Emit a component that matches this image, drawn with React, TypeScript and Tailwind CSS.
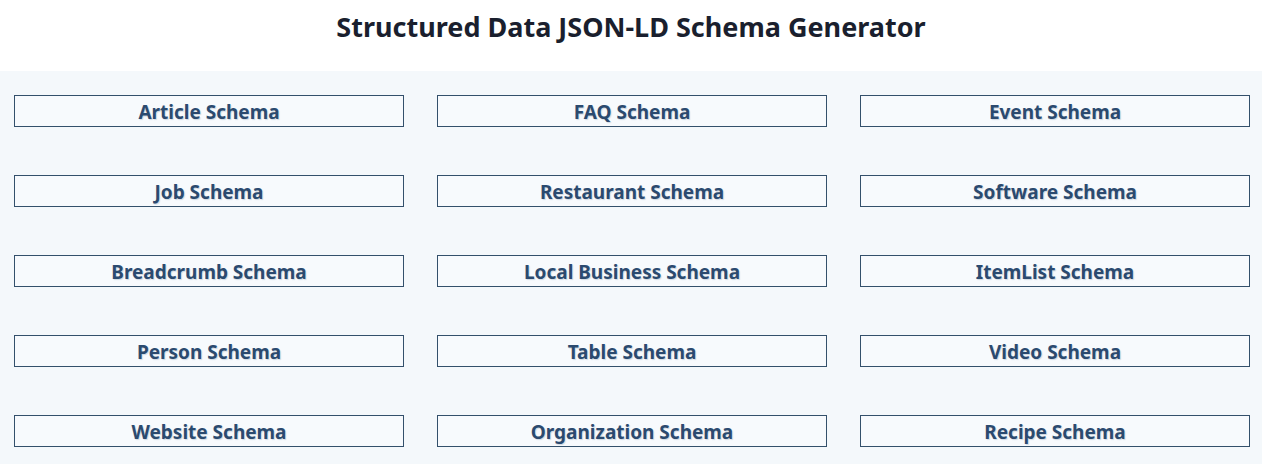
const schemas = [
  "Article Schema",
  "FAQ Schema",
  "Event Schema",
  "Job Schema",
  "Restaurant Schema",
  "Software Schema",
  "Breadcrumb Schema",
  "Local Business Schema",
  "ItemList Schema",
  "Person Schema",
  "Table Schema",
  "Video Schema",
  "Website Schema",
  "Organization Schema",
  "Recipe Schema",
];

export default function App() {
  return (
    <div
      className="min-h-screen bg-white"
      style={{ fontFamily: '"Noto Sans", "Open Sans", sans-serif' }}
    >
      <header className="h-[71px] flex items-center justify-center">
        <h1 className="text-[27px] font-bold text-[#1a1f2e] pb-[16px]">
          Structured Data JSON-LD Schema Generator
        </h1>
      </header>

      <div className="bg-[#f4f8fb] pl-[14px] pr-[12px] pt-[24px] pb-[18px]">
        <div className="grid grid-cols-3 gap-x-[33px] gap-y-[48px]">
          {schemas.map((name) => (
            <button
              key={name}
              className="h-[32px] border border-[#33506b] bg-[#f7fafd] pt-[2px] text-[19px] font-bold text-[#2b4a6f] leading-none [text-shadow:1px_1px_1px_rgba(43,74,111,0.2)]"
            >
              {name}
            </button>
          ))}
        </div>
      </div>
    </div>
  );
}
